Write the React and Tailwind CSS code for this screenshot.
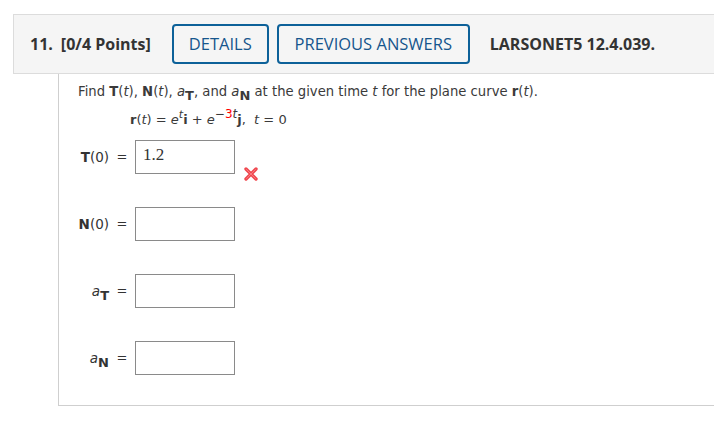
import React from "react";

const XMark = () => (
  <svg width="14" height="14" viewBox="0 0 14 14" className="mt-[27px] ml-[9px] shrink-0">
    <path d="M2 2 L12 12 M12 2 L2 12" stroke="#f0484f" strokeWidth="3.4" strokeLinecap="round" />
    <path d="M2.5 2.5 L11.5 11.5 M11.5 2.5 L2.5 11.5" stroke="#f87a80" strokeWidth="1" strokeLinecap="round" />
  </svg>
);

const AnswerRow = ({ label, value, wrong }) => (
  <div className="flex items-start h-[34px]">
    <div className="w-[50px] h-[34px] flex items-center justify-end text-[13.5px] text-[#333]">
      {label}
    </div>
    <div className="w-[26px] h-[34px] flex items-center justify-center text-[13px] text-[#333]">=</div>
    <div
      className="w-[100px] h-[34px] border border-[#8a8a8a] bg-white px-[7px] pt-[3px] text-[17px] text-[#333] leading-[22px]"
      style={{ fontFamily: '"Liberation Serif", serif' }}
    >
      {value}
    </div>
    {wrong && <XMark />}
  </div>
);

const Sub = ({ children }) => (
  <span className="text-[13px] font-bold align-[-4px] leading-none">{children}</span>
);

const Sup = ({ children }) => (
  <span className="text-[11px] align-[6px] leading-none">{children}</span>
);

export default function App() {
  return (
    <div className="w-[714px] h-[431px] bg-white overflow-hidden" style={{ fontFamily: '"DejaVu Sans", Verdana, sans-serif' }}>
      <div
        className="ml-[13px] mt-[14px] h-[60px] bg-[#f5f5f5] border border-r-0 border-[#dcdcdc] flex items-center"
        style={{ fontFamily: '"Open Sans", sans-serif' }}
      >
        <span className="ml-[16px] text-[16px] font-bold text-[#333]">11.</span>
        <span className="ml-[8px] text-[16px] font-bold text-[#333]">[0/4 Points]</span>
        <button className="ml-[21px] w-[97px] h-[40px] border-2 border-[#0d6199] rounded-[4px] text-[16.5px] font-medium text-[#16568d] bg-transparent">
          DETAILS
        </button>
        <button className="ml-[8px] w-[193px] h-[40px] border-2 border-[#0d6199] rounded-[4px] text-[16.5px] font-medium text-[#16568d] bg-transparent">
          PREVIOUS ANSWERS
        </button>
        <span className="ml-[20px] text-[16px] font-bold text-[#333]">LARSONET5 12.4.039.</span>
      </div>
      <div className="ml-[58px] h-[332px] border-l border-b border-[#cfcfcf] pl-[19px] pt-[8px] text-[13px] text-[#3a3a3a]">
        <div className="h-[20px] leading-[20px] text-[13.2px]">
          Find <b>T</b>(<i>t</i>), <b>N</b>(<i>t</i>), <i>a</i>
          <Sub>T</Sub>, and <i>a</i>
          <Sub>N</Sub> at the given time <i>t</i> for the plane curve <b>r</b>(<i>t</i>).
        </div>
        <div className="ml-[52px] mt-[6px] h-[20px] leading-[20px]">
          <b>r</b>(<i>t</i>) = <i>e</i>
          <Sup><i>t</i></Sup>
          <b>i</b> + <i>e</i>
          <Sup>
            <span className="text-[12px]">−<span className="text-[#ff0000]">3</span><i>t</i></span>
          </Sup>
          <b>j</b>,&nbsp; <i>t</i> = 0
        </div>
        <div className="-ml-[19px] mt-[12px] flex flex-col gap-[33px]">
          <AnswerRow label={<span><b>T</b>(0)</span>} value="1.2" wrong />
          <AnswerRow label={<span><b>N</b>(0)</span>} value="" />
          <AnswerRow label={<span><i>a</i><Sub>T</Sub></span>} value="" />
          <AnswerRow label={<span><i>a</i><Sub>N</Sub></span>} value="" />
        </div>
      </div>
    </div>
  );
}
